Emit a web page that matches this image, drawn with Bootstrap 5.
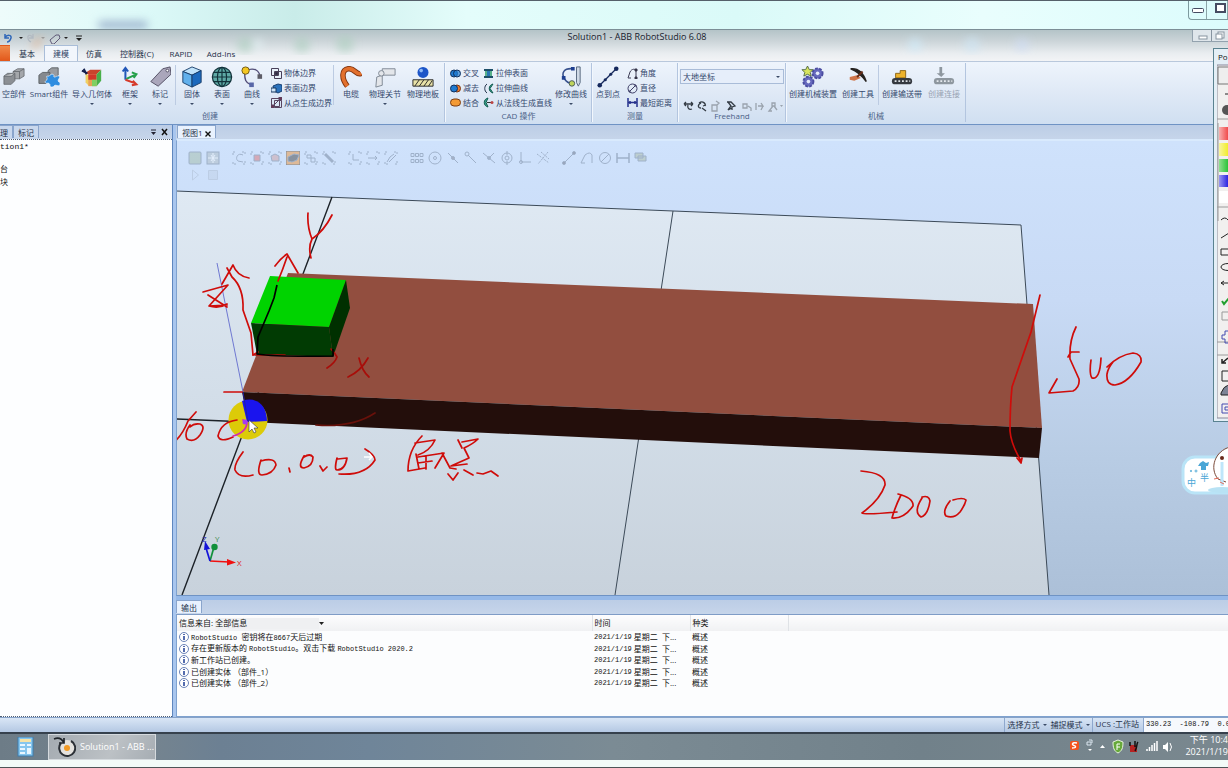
<!DOCTYPE html>
<html lang="zh-CN">
<head>
<meta charset="utf-8">
<meta name="viewport" content="width=device-width, initial-scale=1">
<title>Solution1 - ABB RobotStudio 6.08</title>
<link href="https://cdn.jsdelivr.net/npm/bootstrap@5.3.0/dist/css/bootstrap.min.css" rel="stylesheet">
<style>
body{font:8px/12px "Open Sans","Noto Sans CJK SC",sans-serif;color:#26324a;background:#bfd0e8}
button,select,input{font:inherit;color:inherit}
svg{display:block;flex:none}
.plain{border:0;background:none;padding:0;margin:0;white-space:nowrap}
a{color:inherit;text-decoration:none}
.glass{height:29px;border-top:1px solid #55606a;background:linear-gradient(90deg,#eefcfb,#dcf9f8 12%,#c9ece9 24%,#e4fdfb 38%,#dafaf8 60%,#e9fefd 80%,#dcfcfc)}
.glassblob{left:98px;top:20px;width:50px;height:8px;background:#9fb6cf;filter:blur(4px);border-radius:4px}
.winbtns{height:19px;width:40px;border:1px solid #7d9a9e;border-top:0;border-right:0;border-radius:0 0 0 4px}
.winbtns button{width:28px;border-right:1px solid #8ba5a8}
.titlebar{height:32px;border-top:1px solid #7c8e96;background:linear-gradient(#b4c4c8,#cbd4d8 35%,#e9edf0 75%,#f3f4f6)}
.apptitle{font-size:9px;left:0;right:0;top:1px;padding-left:46px;color:#16202c}
.mdibtns{top:0;right:0;width:36px;height:12px;border:1px solid #93a2ae;border-top:0;border-right:0;background:#dfe6eb}
.ribtabs a{height:16px;line-height:15px;text-align:center;border:1px solid transparent;border-bottom:0}
.ribtabs .filetab{width:10px;background:linear-gradient(#f08a4a,#e2571a)}
.ribtabs .sel{background:#f2f6fc;border-color:#a9bdd8;color:#2b3e63}
.t32{width:32px}.t34{width:34px}.t46{width:46px}.t54{width:54px}
.ribbon{height:63px;border-top:1px solid #b9c8dc;background:linear-gradient(#eef4fc,#dfe9f6 50%,#d0dff1);color:#35486d}
.rgroup{border-right:1px solid #b3c5df;border-left:1px solid #f2f7fd;height:59px;margin-top:1px}
.rtitle{height:12px;line-height:12px;text-align:center;color:#4a5f87}
.rbody{height:47px;padding:0 1px 0 0}
.bigb{height:46px;padding-top:3px;display:flex;flex-direction:column;align-items:center;line-height:11px}
.bigb.drop::after,.caret::after{content:"";border:2px solid transparent;border-top-color:#3a4a66;border-bottom:0;margin-top:4px}
.caret::after{display:inline-block;margin:0 0 2px 4px}
.w28{width:28px}.w30{width:30px}.w32{width:32px}.w36{width:36px}.w38{width:38px}.w40{width:40px}.w42{width:42px}.w44{width:44px}.w52{width:52px}
.vsep{width:1px;height:40px;background:#bccbe2;margin:2px 1px 0}
.smcol{padding-top:3px;display:flex;flex-direction:column}
.smcol button{height:15px;display:flex;align-items:center;gap:2px}
.dim{color:#98a3b3}
.freehand{padding-top:6px}
.coord{width:104px;height:15px;margin:0 0 0 1px;border:1px solid #a9bcd8;background:#e6eefa;padding:0 2px;line-height:12px;appearance:none;border-radius:0}
.combo-arrow{right:5px;top:13px;border:2px solid transparent;border-top-color:#3a4a66;border-bottom:0}
.work{border-top:1px solid #6f93c4;min-height:0}
.side{width:173px;border-right:1px solid #5f87bf}
.tabstrip{height:14px;background:linear-gradient(#bccde6,#c6d5ea)}
.ptab{height:13px;line-height:13px;border:1px solid #8aa5cc;border-bottom:0;background:#c9d8ed;padding:0 4px}
.ptab.on{background:#e9f2fe;margin-left:1px}
.sidebody{border-top:1px dotted #4f5f75;border-bottom:1px dotted #4f5f75;background:#fdfeff;color:#111;font-family:"Liberation Mono","Noto Sans CJK SC",monospace;line-height:13px}
.treegap{margin-top:10px}
.split{width:3px;background:#a9c6ee}
.view{background:linear-gradient(#cfe2fc,#c8daf5 35%,#b8cce4 70%,#acc0d8);border-top:2px solid #d9eafd;border-left:1px solid #7fa2cf;border-bottom:1px solid #6f93c4;overflow:hidden}
.scene{position:absolute;inset:0;width:100%;height:100%}
.vtools{padding:8px 0 0 11px;position:relative;opacity:.45}
.vtools button{width:18px;height:17px;display:flex;align-items:center}
.out{height:121px;border-top:4px solid #96b9e8}
.outbody{background:#fcfdfe;border-left:1px solid #7fa2cf;border-top:1px solid #7f9cc6;border-bottom:1px solid #7fa2cf;color:#111}
.log{width:100%;table-layout:fixed;border-collapse:collapse;margin:0}
.log th,.log td{padding:0 2px;font-weight:400;line-height:10px;height:12px;white-space:nowrap;overflow:hidden}
.log tbody tr:nth-child(even) td{height:11px}
.log th{height:16px;background:linear-gradient(#fdfdfe,#f0f1f3);border-right:1px solid #dfe2e6}
.logline{display:flex;align-items:center;gap:2px;height:10px}
.c1{width:415px}.c2{width:98px}.c3{width:98px}
.mono{font:7px/10px "Liberation Mono",monospace}
.src{width:104px;height:11px;line-height:10px;border:0;background:#eff0f2;padding:0;appearance:none}
.statusb{height:15px;background:linear-gradient(#d9e6f6,#b4c8e3);border-top:1px solid #86a2c8;line-height:12px}
.statusb>*{border-left:1px solid #8ea8cd;padding:0 2px 0 3px}
.statusb .caret::after{margin-left:3px}
.statusb .pos{width:85px;background:#f6f9fd;padding:0 0 0 2px;font:7px/13px "Liberation Mono",monospace;overflow:hidden;color:#111}
.taskbar{height:28px;border-top:2px solid #36414d;background:linear-gradient(90deg,#6d7c87,#75848f 12%,#6c8093 18%,#6f8599 30%,#7b8b94 50%,#71818a 75%,#7a888f);color:#fff}
.taskitem{width:108px;height:26px;margin-left:12px;border:1px solid #d5dade;background:linear-gradient(120deg,#a4abb1,#bcc1c5 60%,#a6adb3);color:#fff;display:flex;align-items:center;font-size:9px}
.clock{width:47px;height:26px;line-height:12px;font-size:9px}
.clock div{white-space:nowrap}
.under{height:8px;background:#f2fbf8;border-bottom:1px solid #4c5557}
.palette{right:0;top:48px;width:15px;height:374px;border:1px solid #5a8290;border-right:0;background:#e4eff6;padding:2px 0 3px 3px;overflow:hidden;color:#000}
.ime{right:0;top:446px;width:48px;height:50px}
</style>
</head>
<body class="vh-100 overflow-hidden d-flex flex-column position-relative">

<div class="glass position-relative flex-shrink-0 d-flex justify-content-end">
  <div class="glassblob position-absolute"></div>
  <div class="winbtns d-flex overflow-hidden">
    <button class="plain d-flex align-items-center justify-content-center" aria-label="最小化"><svg width="12" height="5"><rect x=".5" y=".5" width="11" height="4" rx="1" fill="#fff" stroke="#454c62"/></svg></button>
    <button class="plain ps-2 pb-1" aria-label="最大化"><svg width="11" height="10"><rect x="1" y="1" width="9" height="8" fill="#fff" stroke="#454c62" stroke-width="2"/></svg></button>
  </div>
</div>

<header class="titlebar flex-shrink-0 position-relative d-flex flex-column justify-content-between">
  <svg class="position-absolute top-0 start-0 w-100 h-100" viewBox="0 0 1228 31" preserveAspectRatio="none"><defs><filter id="soft"><feGaussianBlur stdDeviation="4"/></filter></defs><g filter="url(#soft)" opacity=".55"><circle cx="245" cy="15" r="8" fill="#a8cdbb"/><circle cx="302" cy="15" r="8" fill="#a8cdbb"/><circle cx="345" cy="14" r="9" fill="#a8cdbb"/><circle cx="258" cy="14" r="5" fill="#eafcff"/><circle cx="915" cy="15" r="7" fill="#cdeeff"/><circle cx="972" cy="15" r="8" fill="#cde7f8"/><circle cx="1022" cy="15" r="7" fill="#cddcf8"/><path d="M33 18l8-10" stroke="#e8a06a" stroke-width="5"/></g></svg>
  <div class="apptitle position-absolute text-center">Solution1 - ABB RobotStudio 6.08</div>
  <div class="position-relative d-flex align-items-center ps-1">
    <button class="plain pt-1" aria-label="撤消"><svg width="82" height="10" viewBox="0 1 82 10" fill="none"><path d="M1 1v4h4M1 5c2-4 7-3 6 0-1 3-3 4-4 4" stroke="#2f67b8" stroke-width="1.500"/><path d="M15 4h4l-2 2zM60 4h4l-2 2z" fill="#222"/><path d="M29 1v4h-4M29 5c-2-4-6-3-5 0 0 2 1 3 3 4" stroke="#b2bac2" stroke-width="1.300"/><path d="M37 4h4l-2 2z" fill="#999"/><path d="M46 7l6-5 3 0 1 3-6 6-2 0z" stroke="#605a78"/><path d="M72 3h6" stroke="#222"/><path d="M72 5h6l-3 3z" fill="#222"/></svg></button>
  </div>
  <div class="mdibtns position-absolute"><svg width="36" height="11" fill="#fff" stroke="#8794a0"><rect x="6" y="6" width="8" height="3"/><path d="M18.500 0v11"/><rect x="25" y="2" width="6" height="6"/><rect x="23" y="4" width="6" height="5"/></svg></div>
  <nav class="ribtabs position-relative d-flex">
    <a href="#" class="filetab" aria-label="文件"></a>
    <a href="#" class="t34">基本</a><a href="#" class="t34 sel">建模</a><a href="#" class="t32">仿真</a><a href="#" class="t54">控制器(C)</a><a href="#" class="t34">RAPID</a><a href="#" class="t46">Add-Ins</a>
  </nav>
</header>

<section class="ribbon flex-shrink-0 d-flex">
  <div class="rgroup border-start-0">
    <div class="rbody d-flex">
      <button class="plain bigb w28"><svg width="22" height="22" viewBox="0 0 24 24"><g stroke="#5c6065" stroke-width=".8"><path d="M11 6l5-3 7 0v8l-5 3h-7z" fill="#a4a7ab"/><path d="M11 6h7l5-3M18 6v8" fill="none"/><path d="M1 11l4-3h8v8l-4 4H1z" fill="#8b8f94"/><path d="M1 11h8l4-3" fill="#d6d8da"/></g></svg>空部件</button>
      <button class="plain bigb w42"><svg width="22" height="22" viewBox="0 0 24 24"><path d="M11 5l4-3h7v8l-4 3h-7z" fill="#989ba0" stroke="#5c6065"/><path d="M1 10l4-3h8v8l-4 4H1z" fill="#85898e" stroke="#5c6065"/><path d="M11 11c2 1 2-3 5-2s0 3 2 3 3-2 5-1-1 3-1 5 3 1 2 4-3 1-5 1-1 2-4 2-1-3-3-4-3 1-4-1 2-2 2-4-2-3 1-3z" fill="#2f8de0" stroke="#fff" stroke-width=".7"/></svg>Smart组件</button>
      <button class="plain bigb drop w44"><svg width="22" height="22" viewBox="0 0 24 24"><path d="M4 8l6-4h12l-5 5H8z" fill="#c9452c"/><path d="M5 8l4 3v11l-4-4z" fill="#f0d060"/><path d="M8 9h9v13H8z" fill="#e8a055"/><path d="M8 9h9v6H8z" fill="#d2382a"/><path d="M17 9l5-5v12l-5 6z" fill="#48b04a"/><path d="M12 15h5v7h-5z" fill="#7fcf62"/><path d="M1 5l6 3M3 3l3 6" stroke="#15204d" stroke-width="2"/></svg>导入几何体</button>
      <button class="plain bigb drop w32"><svg width="22" height="22" viewBox="0 0 24 24" fill="none" stroke-width="2.200"><path d="M7 15V4M4 6l3-4 3 4" stroke="#2257b8"/><path d="M8 14l9-4M14 7l5 2-3 4" stroke="#24a04a"/><path d="M7 15l11 4M15 16l4 4-5 1" stroke="#d63a2a"/></svg>框架</button>
      <button class="plain bigb drop w28"><svg width="22" height="22" viewBox="0 0 24 24"><path d="M2 17L15 3l8-2 1 8L10 22z" fill="#aaa6bb" stroke="#4f4c60"/><circle cx="20" cy="5" r="1.500" fill="#fff" stroke="#4f4c60"/></svg>标记</button>
      <div class="vsep"></div>
      <button class="plain bigb drop w30"><svg width="22" height="22" viewBox="0 0 24 24" stroke="#163b68"><path d="M2 6l10-5 10 4-10 5z" fill="#bfe2fa"/><path d="M2 6l10 4v13L2 18z" fill="#61b0ec"/><path d="M12 10l10-5v13l-10 5z" fill="#1c69bd"/></svg>固体</button>
      <button class="plain bigb drop w30"><svg width="22" height="22" viewBox="0 0 24 24" fill="none" stroke="#12333b" stroke-width="1.300"><circle cx="12" cy="12" r="10.500" fill="#5eaaa6"/><ellipse cx="12" cy="12" rx="5" ry="10.500"/><path d="M12 1v22M1 12h22M3 7h18M3 17h18"/></svg>表面</button>
      <button class="plain bigb drop w30"><svg width="22" height="22" viewBox="0 0 24 24"><path d="M5 5c10-4 15 0 16 7M4 8c0 7 1 10 6 12" fill="none" stroke="#514c76" stroke-width="1.500"/><circle cx="5" cy="5" r="4" fill="#f4c722" stroke="#6b5310"/><path d="M18 9h5v5h-5z" fill="#5c5c66"/><path d="M9 18h5v5H9z" fill="#5867a8"/></svg>曲线</button>
      <div class="smcol ps-1">
        <button class="plain"><svg width="11" height="11" fill="none" stroke="#484059"><path d="M.5.5h7v7h-7zM3.500 3.500h7v7h-7z"/><path d="M4 4h3v3H4z" fill="#2a2840"/></svg>物体边界</button>
        <button class="plain"><svg width="11" height="11"><path d="M2 3l5-2 4 1v6l-4 2-4-2z" fill="#2b72bc" stroke="#163e70"/><path d="M0 5h5v4H0z" fill="#cfe5f8" stroke="#15375f"/></svg>表面边界</button>
        <button class="plain"><svg width="11" height="11" fill="none" stroke="#584560"><path d="M.5 1.500h8v8h-8zM3.500 3.500h7v7h-7zM1 10l9-9"/><path d="M0 8h3v3H0zM8 0h3v3H8z" fill="#6b3350"/></svg>从点生成边界</button>
      </div>
      <div class="vsep"></div>
      <button class="plain bigb w32"><svg width="22" height="22" viewBox="0 0 24 24" fill="none"><path d="M8 22C1 13 2 4 9 3s9 8 14 5" stroke="#813510" stroke-width="6"/><path d="M8 22C1 13 2 4 9 3s9 8 14 5" stroke="#e2702d" stroke-width="4"/></svg>电缆</button>
      <button class="plain bigb drop w36"><svg width="22" height="22" viewBox="0 0 24 24" fill="#e3e6ea" stroke="#7b8490"><path d="M9 3h14v7H9zM3 12l6-2 0 11-7 2z"/><circle cx="8" cy="8" r="3"/></svg>物理关节</button>
      <button class="plain bigb w40"><svg width="22" height="22" viewBox="0 0 24 24"><circle cx="12" cy="7" r="6" fill="#1c55c8"/><circle cx="10" cy="5" r="2" fill="#8db8f5"/><path d="M1 15h22v7H1z" fill="#e8e2a8" stroke="#222"/><path d="M3 22l5-7M8 22l5-7M13 22l5-7M18 22l4-6" stroke="#222"/></svg>物理地板</button>
    </div>
    <div class="rtitle pe-4">创建</div>
  </div>
  <div class="rgroup">
    <div class="rbody d-flex">
      <div class="smcol ps-1">
        <button class="plain"><svg width="11" height="9"><g stroke="#10305e"><circle cx="4" cy="4.500" r="3.500" fill="#1f7ad0"/><circle cx="7" cy="4.500" r="3.500" fill="#1f7ad0" fill-opacity=".7"/></g></svg>交叉</button>
        <button class="plain"><svg width="11" height="9"><circle cx="7" cy="4.500" r="3.500" fill="#ec7a2c" stroke="#7d3610"/><circle cx="4" cy="4.500" r="3.500" fill="#1f7ad0" stroke="#10305e"/></svg>减去</button>
        <button class="plain"><svg width="11" height="9"><rect x=".5" y="1" width="10" height="7" rx="3.500" fill="#f39a35" stroke="#7d3c10"/></svg>结合</button>
      </div>
      <div class="smcol ps-1">
        <button class="plain"><svg width="11" height="11"><path d="M1 1h9v2H1zM1 8h9v2H1z" fill="#1d4e68"/><path d="M2 3h2v5H2zM7 3h2v5H7z" fill="#58b18a"/><path d="M4 3h3v5H4z" fill="#2977b5"/></svg>拉伸表面</button>
        <button class="plain"><svg width="11" height="11" fill="none"><path d="M4 1C1 3 1 8 4 10" stroke="#22324a"/><path d="M10 1C5 2 5 9 10 10L7 5.500z" fill="#39a58c" stroke="#125a50"/></svg>拉伸曲线</button>
        <button class="plain"><svg width="11" height="11"><path d="M5 1C0 2 0 9 5 10L3 5.500z" fill="#39a58c" stroke="#125a50"/><path d="M4 5.500h5" stroke="#333"/><circle cx="9" cy="5.500" r="1.500" fill="#b44"/></svg>从法线生成直线</button>
      </div>
      <button class="plain bigb drop w38"><svg width="22" height="22" viewBox="0 0 24 24" fill="none"><path d="M14 3C4 2 1 8 5 14c2 4 6 5 9 5" stroke="#37508c" stroke-width="1.700"/><path d="M12 1h4v4h-4zM2 11h4v4H2z" fill="#1e3f90"/><circle cx="13" cy="19" r="3" fill="#bfd45a" stroke="#455"/><path d="M18 1h4v17l-2 4-2-4z" fill="#cfd9e5" stroke="#52627a"/></svg>修改曲线</button>
    </div>
    <div class="rtitle">CAD 操作</div>
  </div>
  <div class="rgroup">
    <div class="rbody d-flex">
      <button class="plain bigb w30"><svg width="22" height="22" viewBox="0 0 24 24" fill="#15285c"><path d="M3 21L21 3" stroke="#15285c" stroke-width="1.300"/><circle cx="3" cy="21" r="2.500"/><circle cx="21" cy="3" r="2.500"/><circle cx="15" cy="9" r="1.700"/><circle cx="9" cy="15" r="1.700"/></svg>点到点</button>
      <div class="smcol ps-1 pe-1">
        <button class="plain"><svg width="11" height="11" fill="none" stroke="#3c3c55"><path d="M1 10L3 4c2-4 6-3 6-1v7M1 10h3"/><path d="M8 1h2v2H8zM8 9h2v2H8z" fill="#222"/></svg>角度</button>
        <button class="plain"><svg width="11" height="11" fill="none" stroke="#3c3c65"><circle cx="5.500" cy="5.500" r="4.500"/><path d="M2 9l7-7M7 2h2v2M2 7v2h2"/></svg>直径</button>
        <button class="plain"><svg width="11" height="11" fill="none" stroke="#25308c" stroke-width="1.500"><path d="M1 1v9M10 1v9M1 5.500h9M3 4v3M8 4v3"/></svg>最短距离</button>
      </div>
    </div>
    <div class="rtitle">测量</div>
  </div>
  <div class="rgroup">
    <div class="rbody freehand position-relative">
      <select class="coord d-block" aria-label="坐标系"><option>大地坐标</option></select><span class="combo-arrow position-absolute"></span>
      <div class="pt-3 ps-1"><button class="plain d-block" aria-label="手动工具"><svg width="100" height="13" viewBox="0 0 100 13" fill="none" stroke="#333b44" stroke-width="1.300"><path d="M1 4h9M1 4l2-2M1 4l2 2M10 4l-2-2M10 4l-2 2M5 5c-1 3 1 5 4 4"/><path d="M18 3c-4 2-3 5 0 5M16 3c4-3 7 1 6 3M20 6l3-1M19 8l4 3"/><g stroke="#9aa3ad"><path d="M29 5h5v6h-5zM33 1l3 2-2 2"/><path d="M60 4h4v4h-4zM65 6l3 2v3M73 3v7M75 6h5l-2-3M80 6l-2 4M89 3h3v3h-3zM90 6l-4 5h3M91 6l3 4"/></g><path d="M97 5h3l-1.500 2z" fill="#9aa3ad" stroke="none"/><path d="M44 2h4l4 4-3 1v3M45 2l3 4-3 4 4-2"/></svg></button></div>
    </div>
    <div class="rtitle">Freehand</div>
  </div>
  <div class="rgroup">
    <div class="rbody d-flex">
      <button class="plain bigb w52"><svg width="24" height="22" viewBox="0 0 24 24"><g fill="#6669bd" stroke="#4a4ca0" stroke-dasharray="3 1.500" stroke-width="2"><circle cx="17" cy="8" r="5.500"/><circle cx="7" cy="17" r="5.500"/></g><circle cx="17" cy="8" r="2" fill="#e5ebfa"/><circle cx="7" cy="17" r="2" fill="#e5ebfa"/><path d="M6 0l2 4 4 0-3 3 1 4-4-2-4 2 1-4-3-3h4z" fill="#d9e560" stroke="#4f6840"/></svg>创建机械装置</button>
      <button class="plain bigb w38"><svg width="22" height="22" viewBox="0 0 24 24"><path d="M4 3c9-1 14 5 17 14-5-7-9-11-17-14z" fill="#25211e" stroke="#25211e" stroke-width="1.500"/><path d="M3 12l8-2 4 3-7 3-5-1z" fill="#cf7448"/><path d="M11 12l6-6" stroke="#672c17" stroke-width="2"/></svg>创建工具</button>
      <div class="vsep"></div>
      <button class="plain bigb w44"><svg width="24" height="22" viewBox="0 0 24 24"><path d="M5 8h5V5h6v8H5z" fill="#edb32d" stroke="#8a6416"/><rect x="1" y="13" width="22" height="7" rx="3.500" fill="#35393f"/><path d="M4 16.500h17" stroke="#dfe4e8" stroke-width="2" stroke-dasharray="2 2"/></svg>创建输送带</button>
      <button class="plain bigb w40 dim"><svg width="24" height="22" viewBox="0 0 24 24" fill="#8e979f"><path d="M7 1h3v7h3l-4 4-5-4h3z"/><rect x="1" y="13" width="22" height="7" rx="3.500"/><path d="M4 16.500h17" stroke="#e5e9ee" stroke-width="2" stroke-dasharray="2 2"/></svg>创建连接</button>
    </div>
    <div class="rtitle">机械</div>
  </div>
</section>

<main class="work flex-grow-1 d-flex">
  <aside class="side flex-shrink-0 d-flex flex-column">
    <div class="tabstrip d-flex">
      <a href="#" class="ptab border-start-0 ps-0 pe-1">理</a><a href="#" class="ptab px-1">标记</a>
      <svg class="ms-auto me-1" width="18" height="14"><path d="M1 5h5" stroke="#223"/><path d="M1 7h5l-2.500 3z" fill="#223"/><path d="M12 4l5 6M17 4l-5 6" stroke="#111" stroke-width="1.500"/></svg>
    </div>
    <div class="sidebody flex-grow-1"><div>tion1*</div><div class="treegap">台</div><div>块</div></div>
  </aside>
  <div class="split flex-shrink-0"></div>
  <div class="flex-grow-1 d-flex flex-column overflow-hidden">
    <div class="tabstrip flex-shrink-0"><a href="#" class="ptab on d-inline-block">视图1 <svg class="d-inline-block" width="6" height="6"><path d="M.5.5l5 5M5.500.5l-5 5" stroke="#111" stroke-width="1.400"/></svg></a></div>
    <section class="view flex-grow-1 position-relative">
      <svg class="scene" viewBox="177 141 1051 454" preserveAspectRatio="xMinYMin slice" fill="none">
        <defs><linearGradient id="floor" x1="0" y1="0" x2="0" y2="1"><stop offset="0" stop-color="#dfe9f3"/><stop offset=".5" stop-color="#d3dee9"/><stop offset="1" stop-color="#c8d2dc"/></linearGradient></defs>
        <path d="M176 191L1021 225 1049 595H176z" fill="url(#floor)"/>
        <path d="M176 191L1021 225 1049 595M673 211L615 595" stroke="#3c4a58"/>
        <path d="M332 197L182 595M176 419l72 3" stroke="#1c2228" stroke-width="1.400"/>
        <path d="M288 273L1033 304 1042 428 242 392z" fill="#924e3f"/>
        <path d="M242 392L1042 428 1039 458 248 422z" fill="#230e0b"/>
        <path d="M270 276l76 4-17 47-78-4z" fill="#00d300"/><path d="M251 323l78 4 4 30-76-3z" fill="#013b03"/><path d="M329 327l17-47 4 28-17 49z" fill="#003000"/>
        <path d="M217 263l26 129" stroke="#6f78d2"/>
        <circle cx="248" cy="420" r="19.500" fill="#dccb08"/><path d="M247 422l-5-21c14-5 25 4 25 20z" fill="#1a14ee"/>
        <path d="M243 392l5 30" stroke="#2020a0"/>
        <g stroke="#cf0c0a" stroke-width="1.700" stroke-linecap="round" stroke-linejoin="round">
          <path d="M308 213q-1 14 4 26M332 215q-8 16-20 24-4 8-1 19"/>
          <path d="M275 266q6-8 12-12l11 19M287 257q-4 12-9 24"/>
          <path d="M253 355l-2-22-8-23q1-22-11-33l-5-9M222 284l11-19q4 11 16 13"/>
          <path d="M203 292l25-7-19 21 18-1M208 295l19 12M209 306q10 3 18-2"/>
          <path d="M224 392h18M253 355l5-3"/>
          <g stroke="#a80d09"><path d="M255 355h30M331 349q4 4 6 8-2 6-10 11M359 358q3 13 10 19M368 358q-7 13-20 19"/></g>
          <path d="M316 425q36 3 59-12" stroke="#68110b"/>
          <path d="M196 412l-8 9q-6 15-15 22M190 425q-6 8-3 14 7 4 13-4 6-9 0-11-6-1-10 3M237 420q-16 2-19 16 2 7 15 1"/>
          <path d="M233 436q14-4 14-14l-4-2" stroke="#d32bb3"/>
          <path d="M243 452q-9 12-8 18 4 9 18 5M261 460q-5 15 1 15 11-1 14-10-1-8-15-4M289 468l1 4M304 456q-7 12 0 12 9-2 9-11-3-4-9 0M320 466l3 5 4-4M337 458q-3 12 0 12 8 0 10-12l-9 1M365 449q10 6 10 11-10 16-36 14"/>
          <path d="M422 436q-14 14-14 35l17-3M415 443l20-3q-5 11-17 15M416 454l3 15M418 457l26-4-9 15M426 456v13M418 463l14-2M442 453l8 15 6 1M458 440l4 8M462 442l16-3q-5 5-14 9l5 10-18 8 16-2M448 474l5 6 5-7M464 470l9 5M477 473l6 1 8-3 7 5"/>
          <path d="M1040 295l-9 37-19 55q-2 20-2 44 1 13 11 30M1017 458l4 5 1-5M1076 327q-7 14-6 32l9 20q1 8-6 12l-24 2 8-14M1068 357l3-5h8M1091 360q-2 14 1 18 8 2 9-20M1107 367q12-12 26-14 9 1 8 9-12 21-26 23-9 0-8-11 1-6 6-12"/>
          <path d="M861 471q25 2 24 14-5 15-23 28 2 2 35-1M901 495q-6 12-9 23 12 1 21-12 1-8-15-12M922 498q-9 14-1 19 7-2 9-16-1-6-8-4M950 501q-8 10-4 15 8 3 14-4 5-7 6-12-3-3-13 0"/>
        </g>
        <path d="M277 285l-3 13-5 13-11 26-1 17q20 3 76 2v-7" stroke="#000" stroke-width="1.700" stroke-linejoin="round"/>
        <path d="M364 457h8M369 453l3 4-3 3" stroke="#fff" stroke-width="1.500"/>
        <circle cx="245" cy="422" r="2.500" fill="#a63cf0"/>
        <path d="M249 420v12l3-3 2 4 2-1-2-4h4z" fill="#fff" stroke="#334" stroke-width=".6"/>
        <path d="M210 561l19 1" stroke="#f01010" stroke-width="1.700"/><path d="M227 559l9 3.500-9 3z" fill="#f01010"/>
        <path d="M210 561l4-14" stroke="#10903a" stroke-width="1.700"/><circle cx="214.500" cy="547" r="3.200" fill="#10903a"/>
        <path d="M210 561l-4-13" stroke="#1414d8" stroke-width="1.700"/><path d="M205 541l5 8-6 1z" fill="#1414d8"/>
        <g font-size="8"><text x="237" y="566" fill="#e02020">X</text><text x="215" y="542" fill="#3b8a4c">Y</text><text x="202" y="542" fill="#2c2cae">Z</text></g>
      </svg>
      <div class="vtools d-flex" id="tools1"></div>
      <div class="vtools d-flex pt-0 opacity-25"><button class="plain" aria-label="播放"><svg width="14" height="14" fill="none" stroke="#8b97a6"><path d="M4.500 2l6 5-6 5z"/></svg></button><button class="plain" aria-label="停止"><svg width="14" height="14" fill="#b5c2d4" stroke="#8b97a6"><path d="M2.500 2.500h9v9h-9z"/></svg></button></div>
    </section>
    <section class="out flex-shrink-0 d-flex flex-column">
      <div class="tabstrip flex-shrink-0"><a href="#" class="ptab on d-inline-block ms-0">输出</a></div>
      <div class="outbody flex-grow-1">
        <table class="log">
          <colgroup><col class="c1"><col class="c2"><col class="c3"><col></colgroup>
          <thead><tr><th><label for="src">信息来自:</label> <select id="src" class="src"><option>全部信息</option></select><svg class="d-inline-block ms-n2" width="5" height="5"><path d="M0 1h5l-2.500 3z" fill="#222"/></svg></th><th>时间</th><th>种类</th><th class="border-0"></th></tr></thead>
          <tbody id="rows"></tbody>
        </table>
      </div>
    </section>
  </div>
</main>

<footer class="statusb flex-shrink-0 d-flex justify-content-end">
  <div class="d-flex gap-1"><button class="plain caret">选择方式</button><button class="plain caret">捕捉模式</button></div>
  <div class="pe-1">UCS :工作站</div>
  <div class="pos text-nowrap">330.23&nbsp; -108.79&nbsp; 0.0</div>
</footer>
<div class="taskbar flex-shrink-0 d-flex align-items-center">
  <button class="plain ps-3" aria-label="计算器"><svg width="20" height="20"><rect x="2" y="0" width="15" height="19" fill="#86c6ee" stroke="#3c7dad"/><path d="M4 2h11v3H4z" fill="#f5e3a8"/><path d="M4 7h5v2H4zM11 7h4v2h-4zM4 11h5v2H4zM4 15h5v2H4zM11 11h4v6h-4z" fill="#e8f6ff"/></svg></button>
  <button class="plain taskitem ps-1"><svg class="me-1" width="23" height="22" viewBox="0 0 23 22" fill="none"><circle cx="14" cy="12" r="8" fill="#e4e2de"/><path d="M18 5a8 8 0 1 1-10 2" stroke="#2b3036" stroke-width="2"/><path d="M1 3c5-2 8 0 10 4M11 2v5H6" stroke="#20252a" stroke-width="1.700"/><circle cx="14" cy="12" r="3" fill="#f19a25"/></svg>Solution1 - ABB ...</button>
  <svg class="ms-auto" width="104" height="16" viewBox="0 0 104 16" fill="none"><rect x="1" y="2" width="9" height="9" rx="2" fill="#f4521d"/><path d="M8 4C2 3 3 6 5 6.500S8 9 3 9" stroke="#fff" stroke-width="1.400"/><path d="M18 3h4v3h-4zM20 1h3v3" stroke="#dbe6f0"/><path d="M19 10h4l-2 2zM31 9h5l-2.500-3z" fill="#fff"/><path d="M44 3l5-2 5 2c0 6-1 9-5 11-4-2-5-5-5-11z" fill="#67a93a" stroke="#e6f3dc"/><path d="M48 11V5h3M48 8h3" stroke="#fff"/><path d="M61 6h7v7h-7z" fill="#b62222"/><path d="M61 3v4M66 2v6M69 3c-2 2 0 4-3 9" stroke="#111" stroke-width="1.500"/><path d="M78 12v-2M80.500 12V8M83 12V6M85.500 12V4M88 12V2" stroke="#fff" stroke-width="1.500"/><path d="M94 6h2l3-3v10l-3-3h-2z" fill="#fff"/><path d="M101 4q3 4 0 8" stroke="#fff"/></svg>
  <div class="clock ms-2 overflow-hidden text-end"><div>下午 10:4</div><div>2021/1/19</div></div>
</div>
<div class="under flex-shrink-0"></div>

<aside class="palette position-absolute" aria-label="画笔">
<svg width="60" height="368" viewBox="0 0 60 368">
  <rect y="14" width="60" height="353" fill="#f1f0ef" stroke="#889"/><text x="1" y="9" font-size="8" fill="#111">Po</text>
  <path d="M1 16h40v17H1z" fill="#eee" stroke="#777"/><path d="M1 72v98M0 68h15M0 156h15M0 291h15M0 304h15" stroke="#9a9a9a"/>
  <circle cx="10" cy="59" r="5" fill="#555"/><path d="M8 43h4" stroke="#222"/>
  <defs><linearGradient id="gr"><stop stop-color="#f8b0b0"/><stop offset=".2" stop-color="#f04040"/></linearGradient><linearGradient id="gy"><stop stop-color="#f8f5a0"/><stop offset=".2" stop-color="#f0ec20"/></linearGradient><linearGradient id="gg"><stop stop-color="#90e090"/><stop offset=".2" stop-color="#20c030"/></linearGradient><linearGradient id="gb"><stop stop-color="#9a98f0"/><stop offset=".2" stop-color="#2018e0"/></linearGradient></defs>
  <rect x="2" y="76" width="50" height="13" fill="url(#gr)"/><rect x="2" y="92" width="50" height="13" fill="url(#gy)"/><rect x="2" y="108" width="50" height="13" fill="url(#gg)"/><rect x="2" y="124" width="50" height="12" fill="url(#gb)"/><rect x="2" y="140" width="50" height="12" fill="#fff"/>
  <g fill="none" stroke="#222"><path d="M4 169q4-4 7 0M4 187l8-5M4 198h12v6H4z"/><ellipse cx="11" cy="216" rx="7" ry="3.500"/><path d="M4 232h10M4 232l3-2M4 232l3 2"/><path d="M5 250l2 3 5-6" stroke="#22a030" stroke-width="2"/><path d="M5 261h12v8H5z" stroke="#999"/><path d="M5 284h3v-4h5v12H8v-4H5z" stroke="#444ab0"/><path d="M5 308v4h4M5 312l6-5" stroke-width="1.500"/><path d="M5 320h10v10H5z"/><path d="M4 342q6-14 14-2v4H4z" fill="#7c8496"/><path d="M5 353h12v9H5zM8 356h4v3H8z" stroke="#444ab0"/></g>
</svg>
</aside>
<div class="ime position-absolute overflow-hidden"><svg width="48" height="50" viewBox="0 0 48 50" fill="none"><rect x="3" y="11" width="60" height="36" rx="12" fill="#fff" stroke="#b9e4f7" stroke-width="3"/><ellipse cx="42" cy="44" rx="14" ry="3" fill="#b8e2f4"/><path d="M20 17l3-2 3 2 3-1-1 4-2 0v4h-5v-4h-3z" fill="#4aa6d6"/><circle cx="11" cy="25" r=".7" stroke="#5bafd9"/><circle cx="16" cy="25" r="1" stroke="#5bafd9"/><path d="M50 1C35 5 29 22 38 33l8 3" fill="#fff" stroke="#7b4a38"/><circle cx="42" cy="12" r="2" fill="#6a2a1c"/><path d="M42 16v24" stroke="#bfe6fa" stroke-width="3"/><path d="M34 33l5-1M40 36l4 2" stroke="#e46b5a"/><text x="7" y="40" font-size="9" fill="#4aa6d6">中</text><text x="20" y="35" font-size="9" fill="#4aa6d6">半</text></svg></div>

<script src="https://cdn.jsdelivr.net/npm/bootstrap@5.3.0/dist/js/bootstrap.bundle.min.js"></script>
<script>
const frame='<path d="M1 4V1h3M10 1h3v3M13 10v3h-3M4 13H1v-3" stroke-dasharray="2 1"/>';
const tools=[
 ['视图','<rect x="1" y="1" width="12" height="12" rx="1" fill="#9fb9a0"/>'],['查看全部','<rect x="1" y="1" width="12" height="12" fill="#a9b7bd"/><path d="M7 2v10M2 7h10M5 4l4 6M9 4l-4 6" stroke="#fff"/>',8],
 ['曲线',frame+'<path d="M11 4C5 1 3 8 6 10l5 1"/>'],['表面',frame+'<path d="M4 4h6v6H4z" fill="#d66"/>'],['物体',frame+'<path d="M3 5l4-2 4 2v5H4z" fill="#c99"/>'],
 ['部件','<rect x="0" y="0" width="14" height="14" fill="#f08a22" stroke="#222"/><path d="M2 6l6-3 5 1-2 5-5 2-4-1z" fill="#333"/>'],['组',frame+'<path d="M3 4h4v3H3zM7 7h4v4H7z"/>'],['机械装置',frame+'<path d="M3 3l8 8" stroke-width="3"/>',4],
 ['目标点',frame+'<path d="M5 3v6h6"/>'],['移动指令',frame+'<path d="M2 7h9M9 5l2 2-2 2"/>'],['路径',frame+'<path d="M3 11l3-5 4-3M5 11l7-7"/>',9],
 ['捕捉对象','<path d="M1 2.500h3v3H1zM5.500 2.500h3v3h-3zM10 2.500h3v3h-3zM1 8.500h3v3H1zM5.500 8.500h3v3h-3zM10 8.500h3v3h-3z"/>'],['中心','<circle cx="7" cy="7" r="6"/><circle cx="7" cy="7" r="1.500"/>'],['中点','<path d="M2 2l10 10"/><circle cx="7" cy="7" r="1.500" fill="#778"/>'],['末端','<path d="M4 4l8 8"/><circle cx="3" cy="3" r="2"/>'],
 ['边缘','<path d="M1 2l12 10M12 2L6 8"/><circle cx="7" cy="7" r="1.500"/>'],['重心','<circle cx="7" cy="7" r="5"/><circle cx="7" cy="7" r="2"/><path d="M7 0v4M7 10v4"/>'],['本地原点','<path d="M3 1v10h10"/><circle cx="3" cy="11" r="1.500"/>'],['网格','<path d="M1 3l12 9M12 1L2 13M5 1l8 7" stroke-dasharray="2 1"/>',8],
 ['点到点','<path d="M2 12L12 2"/><circle cx="2" cy="12" r="1.500" fill="#556"/><circle cx="12" cy="2" r="1.500" fill="#556"/>'],['角度','<path d="M1 12l4-8q5-4 7 0v8M1 12h4"/>'],['直径','<circle cx="7" cy="7" r="5.500"/><path d="M3 11l8-8"/>'],['最短距离','<path d="M1 2v10M13 2v10M1 7h12" stroke-width="1.500"/>'],['保持测量','<path d="M1 2h8v5H1zM4 5h8v5H4z" fill="#a9b89a"/>']];
document.getElementById('tools1').innerHTML=tools.map(([n,p,g])=>`<button class="plain${n=='部件'?' active':''}" aria-label="${n}"><svg width="14" height="14" viewBox="0 0 14 14" fill="none" stroke="#67788f">${p}</svg></button>`+(g?`<i class="p-1"></i>`:'')).join('');
const m=t=>`<span class="mono">${t}</span>`;
const logs=[m('RobotStudio ')+' 密钥将在'+m('8667')+'天后过期','存在更新版本的 '+m('RobotStudio')+'。双击下载 '+m('RobotStudio 2020.2'),'新工作站已创建。','已创建实体 （部件_1）','已创建实体 （部件_2）'];
document.getElementById('rows').innerHTML=logs.map(t=>`<tr><td><div class="logline"><svg width="10" height="10" fill="none"><circle cx="5" cy="5" r="4.500" fill="#fff" stroke="#6b83b8"/><path d="M5 4v4M5 2v1" stroke="#1c3d94" stroke-width="1.500"/></svg><span>${t}</span></div></td><td><div class="logline">${m('2021/1/19')}<span>星期二 &nbsp;下...</span></div></td><td><div class="logline">概述</div></td><td></td></tr>`).join('');
</script>
</body>
</html>
